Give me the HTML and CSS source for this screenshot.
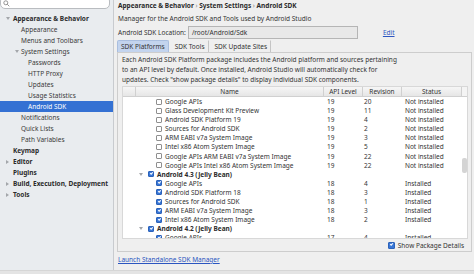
FILE: index.html
```html
<!DOCTYPE html>
<html>
<head>
    <title>Settings - Android SDK</title>
    <meta charset="utf-8">
    <link rel="stylesheet" href="styles.css">
</head>
<body>
    <div class="window">
        <div class="sidebar">
            <div class="search">
                <svg width="7" height="7" viewBox="0 0 7 7"><circle cx="2.8" cy="2.8" r="2" fill="none" stroke="#888" stroke-width="0.9"/><line x1="4.3" y1="4.3" x2="6.3" y2="6.3" stroke="#888" stroke-width="0.9"/></svg>
            </div>
            <div class="tree">
                <div class="node lvl0 bold"><span class="arrow down"></span>Appearance &amp; Behavior</div>
                <div class="node lvl1">Appearance</div>
                <div class="node lvl1">Menus and Toolbars</div>
                <div class="node lvl1 sub"><span class="arrow down"></span>System Settings</div>
                <div class="node lvl2">Passwords</div>
                <div class="node lvl2">HTTP Proxy</div>
                <div class="node lvl2">Updates</div>
                <div class="node lvl2">Usage Statistics</div>
                <div class="node lvl2 selected">Android SDK</div>
                <div class="node lvl1">Notifications</div>
                <div class="node lvl1">Quick Lists</div>
                <div class="node lvl1">Path Variables</div>
                <div class="node lvl0 bold">Keymap</div>
                <div class="node lvl0 bold"><span class="arrow right"></span>Editor</div>
                <div class="node lvl0 bold">Plugins</div>
                <div class="node lvl0 bold"><span class="arrow right"></span>Build, Execution, Deployment</div>
                <div class="node lvl0 bold"><span class="arrow right"></span>Tools</div>
            </div>
        </div>

        <div class="content">
            <div class="crumbs">Appearance &amp; Behavior <span class="sep">›</span> System Settings <span class="sep">›</span> Android SDK</div>
            <div class="intro">Manager for the Android SDK and Tools used by Android Studio</div>
            <div class="location">
                <span class="loc-label">Android SDK Location:</span>
                <div class="loc-input">/root/Android/Sdk</div>
                <a class="link edit">Edit</a>
            </div>
            <div class="tabs">
                <div class="tab active">SDK Platforms</div>
                <div class="tab">SDK Tools</div>
                <div class="tab">SDK Update Sites</div>
            </div>
            <div class="panel">
                <p class="help">Each Android SDK Platform package includes the Android platform and sources pertaining<br>to an API level by default. Once installed, Android Studio will automatically check for<br>updates. Check "show package details" to display individual SDK components.</p>

                <div class="table">
                    <div class="thead">
                        <div class="th"></div>
                        <div class="th">Name</div>
                        <div class="th">API Level</div>
                        <div class="th">Revision</div>
                        <div class="th">Status</div>
                        <div class="th last"></div>
                    </div>
                    <div class="tbody">
                        <div class="rows">
                            <div class="row"><div class="name item"><span class="cb"></span>Google APIs</div><div class="val">19</div><div class="val rev">20</div><div class="val">Not installed</div></div>
                            <div class="row"><div class="name item"><span class="cb"></span>Glass Development Kit Preview</div><div class="val">19</div><div class="val rev">11</div><div class="val">Not installed</div></div>
                            <div class="row"><div class="name item"><span class="cb"></span>Android SDK Platform 19</div><div class="val">19</div><div class="val rev">4</div><div class="val">Not installed</div></div>
                            <div class="row"><div class="name item"><span class="cb"></span>Sources for Android SDK</div><div class="val">19</div><div class="val rev">2</div><div class="val">Not installed</div></div>
                            <div class="row"><div class="name item"><span class="cb"></span>ARM EABI v7a System Image</div><div class="val">19</div><div class="val rev">3</div><div class="val">Not installed</div></div>
                            <div class="row"><div class="name item"><span class="cb"></span>Intel x86 Atom System Image</div><div class="val">19</div><div class="val rev">5</div><div class="val">Not installed</div></div>
                            <div class="row"><div class="name item"><span class="cb"></span>Google APIs ARM EABI v7a System Image</div><div class="val">19</div><div class="val rev">22</div><div class="val">Not installed</div></div>
                            <div class="row"><div class="name item"><span class="cb"></span>Google APIs Intel x86 Atom System Image</div><div class="val">19</div><div class="val rev">22</div><div class="val">Not installed</div></div>
                            <div class="row"><div class="name group"><span class="arrow down"></span><span class="cb on"></span>Android 4.3 (Jelly Bean)</div><div class="val"></div><div class="val rev"></div><div class="val"></div></div>
                            <div class="row"><div class="name item"><span class="cb on"></span>Google APIs</div><div class="val">18</div><div class="val rev">4</div><div class="val">Installed</div></div>
                            <div class="row"><div class="name item"><span class="cb on"></span>Android SDK Platform 18</div><div class="val">18</div><div class="val rev">3</div><div class="val">Installed</div></div>
                            <div class="row"><div class="name item"><span class="cb on"></span>Sources for Android SDK</div><div class="val">18</div><div class="val rev">1</div><div class="val">Installed</div></div>
                            <div class="row"><div class="name item"><span class="cb on"></span>ARM EABI v7a System Image</div><div class="val">18</div><div class="val rev">3</div><div class="val">Installed</div></div>
                            <div class="row"><div class="name item"><span class="cb on"></span>Intel x86 Atom System Image</div><div class="val">18</div><div class="val rev">2</div><div class="val">Installed</div></div>
                            <div class="row"><div class="name group"><span class="arrow down"></span><span class="cb on"></span>Android 4.2 (Jelly Bean)</div><div class="val"></div><div class="val rev"></div><div class="val"></div></div>
                            <div class="row"><div class="name item"><span class="cb on"></span>Google APIs</div><div class="val">17</div><div class="val rev">4</div><div class="val">Installed</div></div>
                        </div>
                        <div class="scrollbar"><div class="thumb"></div></div>
                    </div>
                </div>

                <div class="details">
                    <span class="cb on"></span>Show Package Details
                </div>
            </div>
            <div class="launch"><a class="link">Launch Standalone SDK Manager</a></div>
        </div>
    </div>
    <div class="statusbar"></div>
</body>
</html>
```

FILE: styles.css
```css
body {
    margin: 0;
    width: 474px;
    height: 274px;
    overflow: hidden;
    font-family: "Noto Sans", "DejaVu Sans", sans-serif;
    font-size: 6.5px;
    color: #333;
    background-color: #ececec;
}
.window {
    display: flex;
    height: 270px;
    border-bottom: 1px solid #d6d6d6;
}
.statusbar {
    height: 3px;
    background-color: #e4e4e4;
}

/* sidebar */
.sidebar {
    width: 113px;
    flex-shrink: 0;
    background-color: #e9ecef;
    border-right: 1px solid #c8cbcf;
}
.search {
    height: 13px;
    margin: -4px 3px 0 0;
    background-color: white;
    border: 1px solid #b9bcc0;
    border-radius: 5px;
    box-sizing: border-box;
    display: flex;
    align-items: flex-end;
    padding: 0 0 1px 2px;
}
.tree {
    margin-top: 4px;
}
.node {
    height: 11px;
    line-height: 11px;
    white-space: nowrap;
    position: relative;
    color: #3a3a3a;
}
.node.bold {
    font-weight: bold;
    color: #2b2b2b;
}
.lvl0 { padding-left: 13px; }
.lvl1 { padding-left: 21px; }
.lvl2 { padding-left: 28px; }
.node.selected {
    background-color: #3471d3;
    color: white;
}
.node .arrow {
    position: absolute;
    top: 4px;
}
.lvl0 .arrow { left: 6px; }
.lvl1 .arrow { left: 15px; }
.arrow.down {
    width: 0;
    height: 0;
    border-left: 2px solid transparent;
    border-right: 2px solid transparent;
    border-top: 3px solid #a3a6aa;
}
.arrow.right {
    width: 0;
    height: 0;
    border-top: 2px solid transparent;
    border-bottom: 2px solid transparent;
    border-left: 3px solid #a3a6aa;
}

/* content */
.content {
    flex-grow: 1;
    display: flex;
    flex-direction: column;
    background-color: #efefef;
    min-width: 0;
}
.crumbs {
    height: 11px;
    line-height: 11px;
    padding-left: 4px;
    font-weight: bold;
    color: #2b2b2b;
}
.crumbs .sep {
    font-weight: normal;
    color: #777;
}
.intro {
    height: 13px;
    line-height: 13px;
    padding-left: 4px;
    margin-top: 1px;
}
.location {
    display: flex;
    align-items: center;
    height: 15px;
    padding-left: 4px;
    white-space: nowrap;
}
.loc-input {
    width: 170px;
    height: 13px;
    line-height: 12px;
    box-sizing: border-box;
    border: 1px solid #b5b5b5;
    background-color: #e8e8e8;
    padding-left: 3px;
    margin-left: 2px;
}
.link {
    color: #2b55c0;
    text-decoration: underline;
}
.edit {
    margin-left: 25px;
}
.tabs {
    display: flex;
    height: 12px;
    padding-left: 3px;
    gap: 2px;
}
.tab {
    line-height: 11px;
    padding: 0 3px;
    border: 1px solid transparent;
    border-bottom: none;
    border-right-color: #c5c5c5;
}
.tab.active {
    background-color: #c3d4ee;
    border-color: #a9bedf;
    border-radius: 2px 2px 0 0;
}
.panel {
    height: 200px;
    margin: 0 2px 0 3px;
    border: 1px solid #cdcdcd;
    box-sizing: border-box;
    padding: 2px 3px 0 4px;
}
.help {
    margin: 0;
    line-height: 10px;
}

/* package table */
.table {
    margin-top: 1px;
    width: 346px;
    height: 153px;
    background-color: white;
    overflow: hidden;
    border: 1px solid #d8d8d8;
    box-sizing: border-box;
}
.thead {
    display: grid;
    grid-template-columns: 13px 188px 39px 39px 60px 1fr;
    height: 9px;
    background: linear-gradient(#f6f6f6, #e6e6e6);
    border-bottom: 1px solid #d0d0d0;
}
.th {
    line-height: 9px;
    text-align: center;
    border-right: 1px solid #d0d0d0;
}
.th.last {
    border-right: none;
    background-color: #f4f4f4;
}
.tbody {
    display: flex;
}
.rows {
    flex-grow: 1;
}
.row {
    display: grid;
    grid-template-columns: 201px 39px 39px 60px;
    height: 9.1px;
    line-height: 9.1px;
    white-space: nowrap;
}
.name {
    display: flex;
    align-items: center;
}
.name.item { padding-left: 33px; }
.name.group {
    padding-left: 16px;
    font-weight: bold;
    color: #2b2b2b;
}
.name.group .arrow {
    margin-right: 5px;
}
.val {
    padding-left: 3px;
}
.val.rev {
    padding-left: 1px;
}
.cb {
    display: inline-block;
    width: 6px;
    height: 6px;
    box-sizing: border-box;
    border: 1px solid #8f8f8f;
    background-color: white;
    border-radius: 1px;
    margin-right: 3px;
    position: relative;
    flex-shrink: 0;
}
.cb.on {
    background-color: #3876d6;
    border-color: #2c62b9;
}
.cb.on::after {
    content: "";
    position: absolute;
    left: 1px;
    top: 0px;
    width: 2px;
    height: 1px;
    border-left: 1px solid white;
    border-bottom: 1px solid white;
    transform: rotate(-45deg);
}
.scrollbar {
    width: 6px;
    flex-shrink: 0;
}
.thumb {
    margin-top: 61px;
    width: 5px;
    height: 15px;
    background-color: #d4d4d4;
    border-radius: 2px;
}
.details {
    display: flex;
    align-items: center;
    justify-content: flex-end;
    height: 13px;
    padding-right: 4px;
}
.details .cb {
    width: 7px;
    height: 7px;
    margin-right: 3px;
}
.launch {
    padding-left: 4px;
    height: 16px;
    line-height: 16px;
}
```
